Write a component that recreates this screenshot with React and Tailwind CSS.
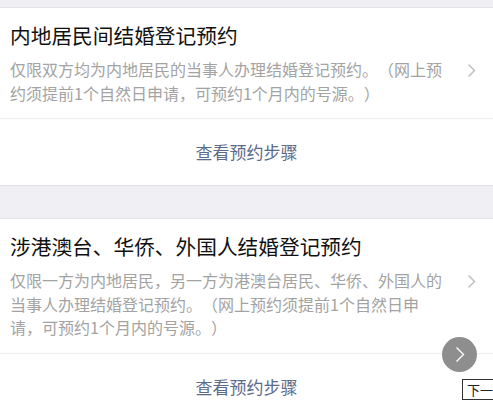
import React from 'react';

const items = [
  {
    title: '内地居民间结婚登记预约',
    desc: '仅限双方均为内地居民的当事人办理结婚登记预约。（网上预约须提前1个自然日申请，可预约1个月内的号源。）',
  },
  {
    title: '涉港澳台、华侨、外国人结婚登记预约',
    desc: '仅限一方为内地居民，另一方为港澳台居民、华侨、外国人的当事人办理结婚登记预约。（网上预约须提前1个自然日申请，可预约1个月内的号源。）',
  },
];

function Card({item}) {
  return (
    <div className="bg-white border-b border-[#e3e3e8]">
      <div className="flex items-start pl-[10px] pt-[12px] pb-[13px] border-b border-[#ececef]">
        <div className="w-[440px]">
          <div className="text-[20.7px] leading-[30px] text-[#111]">{item.title}</div>
          <div className="mt-[8px] text-[16px] leading-[23.5px] text-[#a3a3a3]">{item.desc}</div>
        </div>
        <div className="flex-1 flex justify-center pt-[43px]">
          <svg width="9" height="15" viewBox="0 0 9 15" fill="none">
            <path d="M1.5 1.5L7.5 7.5L1.5 13.5" stroke="#c4c4c4" strokeWidth="1.7" />
          </svg>
        </div>
      </div>
      <div className="h-[66px] flex items-center justify-center text-[17px] text-[#5b6a8a]">
        查看预约步骤
      </div>
    </div>
  );
}

export default function App() {
  return (
    <div
      className="relative w-[493px] h-[415px] overflow-hidden bg-[#efeff4] [text-spacing-trim:space-all]"
      style={{fontFamily: '"Noto Sans CJK SC", "Liberation Sans", sans-serif'}}
    >
      <div className="h-[8px] border-b border-[#e3e3e8]" />
      <Card item={items[0]} />
      <div className="h-[33px] border-b border-[#e3e3e8]" />
      <Card item={items[1]} />

      <div className="absolute left-[442px] top-[337px] w-[35px] h-[35px] rounded-full bg-[#8e8e8e] flex items-center justify-center">
        <svg width="10" height="17" viewBox="0 0 10 17" fill="none">
          <path d="M1.5 1.5L8.5 8.5L1.5 15.5" stroke="#fff" strokeWidth="1.4" />
        </svg>
      </div>
      <div className="absolute left-[462px] top-[379px] h-[21px] pl-[4px] pr-[4px] bg-white border border-[#333] text-[13px] leading-[19px] text-[#222] whitespace-nowrap">
        下一页
      </div>
    </div>
  );
}
